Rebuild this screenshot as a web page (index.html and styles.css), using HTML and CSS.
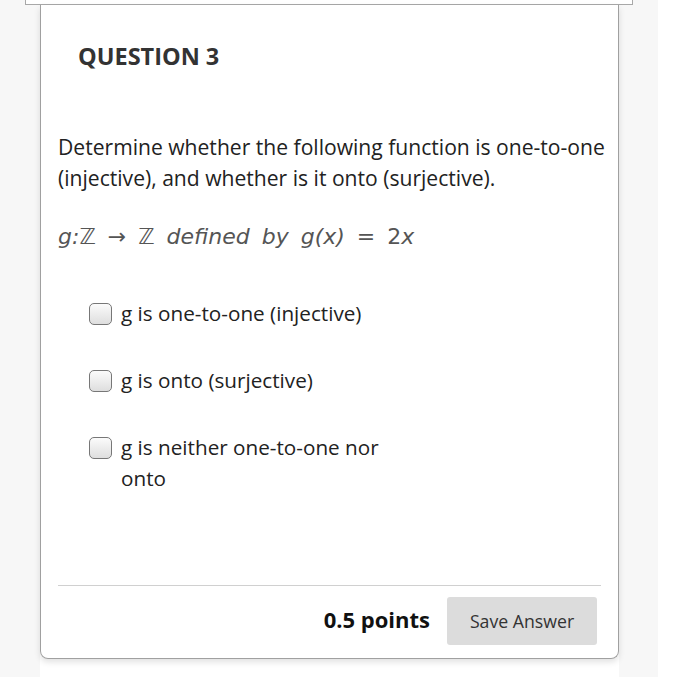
FILE: index.html
```html
<!DOCTYPE html>
<html lang="en">
<head>
    <meta charset="utf-8">
    <meta name="viewport" content="width=device-width, initial-scale=1">
    <title>Question 3</title>
    <link rel="stylesheet" href="styles.css">
</head>
<body>
<div class="page">
    <div class="prev-card"></div>
    <div class="column">
        <div class="question-card">
            <h2 class="question-title">QUESTION 3</h2>
            <p class="question-text">Determine whether the following function is one-to-one (injective), and whether is it onto (surjective).</p>
            <p class="math">g:ℤ → ℤ defined by g(x) <span class="upright">= 2</span>x</p>
            <div class="options">
                <label class="option"><span class="checkbox"></span><span class="option-text">g is one-to-one (injective)</span></label>
                <label class="option"><span class="checkbox"></span><span class="option-text">g is onto (surjective)</span></label>
                <label class="option"><span class="checkbox"></span><span class="option-text">g is neither one-to-one nor onto</span></label>
            </div>
            <div class="footer">
                <span class="points">0.5 points</span>
                <button class="save-btn">Save Answer</button>
            </div>
        </div>
    </div>
</div>
</body>
</html>
```

FILE: styles.css
```css
body {
    margin: 0;
    background-color: #ffffff;
    font-family: "Open Sans", Arial, sans-serif;
    color: #222;
}
.page {
    width: 658px;
    height: 677px;
    background-color: #f7f7f7;
    display: flex;
    flex-direction: column;
}
.prev-card {
    margin-left: 25px;
    width: 606px;
    height: 4px;
    background-color: #fff;
    border: 1px solid #a8a8a8;
    border-top: none;
}
.column {
    margin-left: 40px;
    width: 579px;
    flex: 1;
    background-color: #fff;
}
.question-card {
    border: 1.5px solid #a0a0a0;
    border-top: none;
    border-radius: 0 0 8px 8px;
    box-shadow: 0 3px 6px rgba(0, 0, 0, 0.12);
    padding: 36px 17px 13px 17px;
    height: 654px;
    box-sizing: border-box;
}
.question-title {
    margin: 0 0 0 20px;
    font-size: 23.5px;
    line-height: 30px;
    font-weight: bold;
    color: #333;
}
.question-text {
    margin: 60px -14px 0 0;
    font-size: 21.1px;
    line-height: 31px;
}
.math {
    margin: 28px 0 0 0;
    font-family: "DejaVu Sans", sans-serif;
    font-style: italic;
    font-size: 22px;
    line-height: 31px;
    word-spacing: 5px;
    color: #555;
}
.upright {
    font-style: normal;
}
.options {
    margin: 46px 0 0 31px;
    display: flex;
    flex-direction: column;
    gap: 36px;
}
.option {
    display: flex;
    align-items: flex-start;
    width: 300px;
    font-size: 20.7px;
    line-height: 31px;
}
.checkbox {
    flex: none;
    width: 21px;
    height: 20px;
    margin-top: 5px;
    margin-right: 9px;
    border: 1.5px solid #777;
    border-radius: 5px;
    background: linear-gradient(#fbfbfb, #dedede);
}
.footer {
    margin-top: 91px;
    border-top: 1.5px solid #d0d0d0;
    padding: 11px 4px 0 0;
    display: flex;
    justify-content: flex-end;
    align-items: center;
    gap: 17px;
}
.points {
    font-size: 22px;
    font-weight: bold;
    color: #111;
    margin-bottom: 4px;
}
.save-btn {
    width: 150px;
    height: 48px;
    background-color: #dcdcdc;
    border: none;
    border-radius: 3px;
    font-family: "Open Sans", Arial, sans-serif;
    font-size: 17.7px;
    color: #333;
}
```
